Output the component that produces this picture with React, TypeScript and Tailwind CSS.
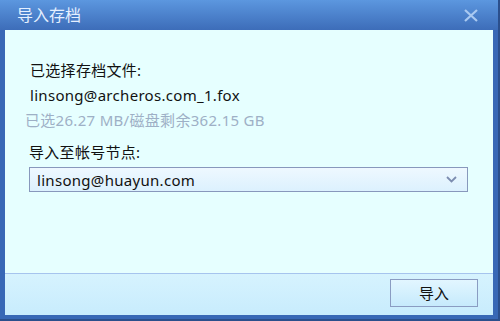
import React from "react";

export default function App() {
  const font = { fontFamily: '"Noto Sans", "Noto Sans CJK SC", sans-serif' };
  return (
    <div className="w-[500px] h-[321px] overflow-hidden" style={font}>
      <div className="w-[500px] h-[321px] flex flex-col bg-[#3868b6] border-r-[2px] border-b-[2px] border-r-[#2b4f8c] border-b-[#2b4f8c]">
        <div className="h-[30px] shrink-0 flex items-center justify-between pl-[17px] pr-[20px] bg-gradient-to-b from-[#5c97df] to-[#3d6db9]">
          <span className="text-[16px] text-[#e4efff] leading-none">导入存档</span>
          <svg width="14" height="13" viewBox="0 0 14 13">
            <path d="M1 1 L13 12 M13 1 L1 12" stroke="#a9c9f1" strokeWidth="2.2" />
          </svg>
        </div>
        <div className="flex-1 flex flex-col ml-[5px] mr-[5px] mb-[4px]">
          <div className="flex-1 bg-[#e6ffff] flex flex-col pl-[25px] pt-[30px] text-[15px] tracking-[0.3px] leading-[20px] text-[#111]">
            <div>已选择存档文件:</div>
            <div className="mt-[5px]">linsong@archeros.com_1.fox</div>
            <div className="mt-[5px] -ml-[5px] text-[#9eb0c6]">已选26.27 MB/磁盘剩余362.15 GB</div>
            <div className="mt-[12px] -ml-[1px]">导入至帐号节点:</div>
            <div className="mt-[5px] -ml-[1px] w-[439px] h-[25px] border border-[#8898bc] bg-gradient-to-b from-[#eef8ff] to-[#dcf1fe] flex items-center justify-between pl-[7px] pr-[10px]">
              <span>linsong@huayun.com</span>
              <svg width="11" height="7" viewBox="0 0 11 7">
                <path d="M1 1 L5.5 5.5 L10 1" stroke="#7c8cb0" strokeWidth="1.8" fill="none" />
              </svg>
            </div>
          </div>
          <div className="h-[42px] shrink-0 border-t border-[#a6c4ee] bg-gradient-to-b from-[#d6f3fe] to-[#c8ecfd] flex items-start justify-end pt-[5px] pr-[15px]">
            <button className="w-[88px] h-[28px] border border-[#8a9cc2] bg-gradient-to-b from-[#e2f6ff] to-[#c6eafc] text-[15px] text-[#111] flex items-center justify-center">
              导入
            </button>
          </div>
        </div>
      </div>
    </div>
  );
}
